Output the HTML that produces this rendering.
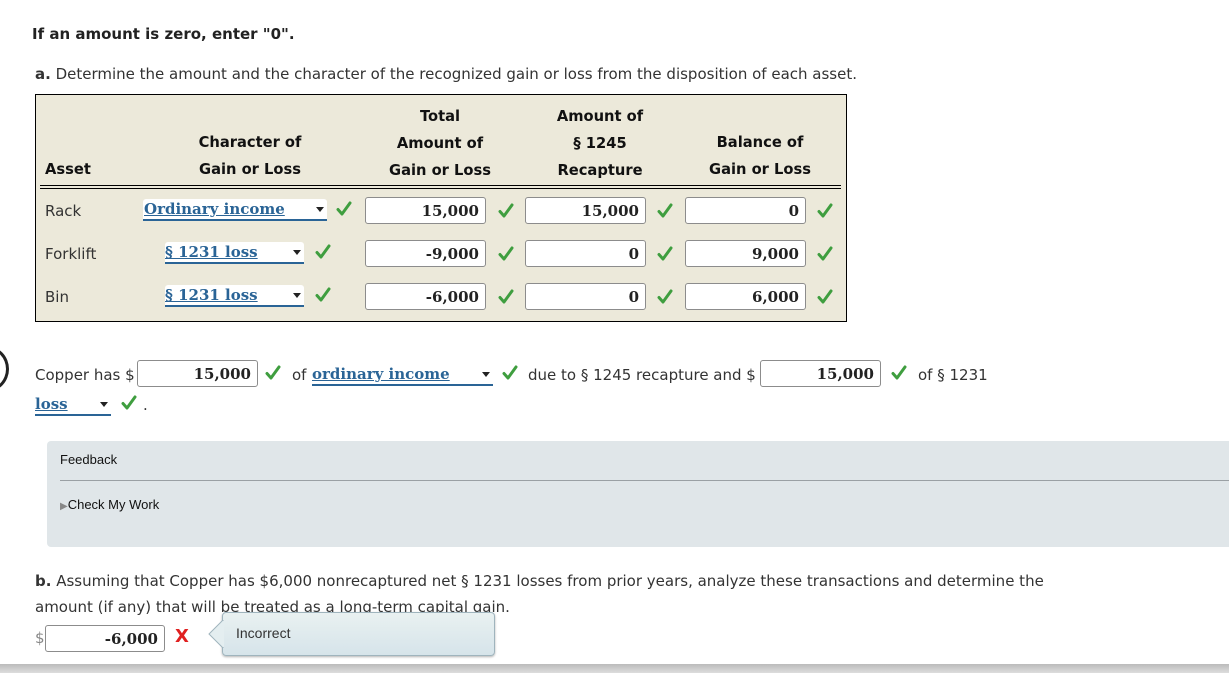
<!DOCTYPE html>
<html><head><meta charset="utf-8"><style>
body{margin:0;width:1229px;height:673px;position:relative;background:#fff;font-family:Verdana,"DejaVu Sans",sans-serif;font-size:15px;color:#333;overflow:hidden}
.a{position:absolute;white-space:nowrap}
.t{position:absolute;white-space:nowrap;line-height:18px}
.in{position:absolute;height:25px;width:119px;border:1px solid #8c8c8c;border-radius:3px;background:#fff;font-family:"DejaVu Serif",Georgia,serif;font-weight:bold;font-size:15px;color:#222;text-align:right;line-height:27px;box-sizing:content-box;padding:0;}
.in span{padding-right:6px}
.ck{position:absolute;width:16px;height:16px}
.sel{position:absolute;font-family:"DejaVu Serif",Georgia,serif;font-weight:bold;font-size:15px;color:#2a6496;border-bottom:2px solid #2a6496;height:20px;line-height:20px;text-decoration:underline;background:#fff;border-radius:3px 3px 0 0}
.sel i{position:absolute;right:3px;top:8px;width:0;height:0;border-left:4px solid transparent;border-right:4px solid transparent;border-top:5px solid #222}
.h{position:absolute;font-weight:bold;color:#111;text-align:center;line-height:27px;font-size:14.7px}
</style></head><body>
<svg width="0" height="0" style="position:absolute"><defs><symbol id="c" viewBox="0 0 16 16"><path d="M2 8.5 L6 13 L14 2" fill="none" stroke="#3f9e3f" stroke-width="3" stroke-linecap="round" stroke-linejoin="round"/></symbol></defs></svg>

<div class="t" style="left:32px;top:25px;font-weight:bold;color:#222">If an amount is zero, enter "0".</div>
<div class="t" style="left:35px;top:65px"><b>a.</b> Determine the amount and the character of the recognized gain or loss from the disposition of each asset.</div>

<div class="a" style="left:35px;top:94px;width:810px;height:226px;border:1px solid #000;background:#ece9da"></div>
<div class="h" style="left:45px;top:156px;text-align:left">Asset</div>
<div class="h" style="left:170px;top:129px;width:160px">Character of<br>Gain or Loss</div>
<div class="h" style="left:370px;top:103px;width:140px">Total<br>Amount of<br>Gain or Loss</div>
<div class="h" style="left:530px;top:103px;width:140px">Amount of<br>§ 1245<br>Recapture</div>
<div class="h" style="left:690px;top:129px;width:140px">Balance of<br>Gain or Loss</div>
<div class="a" style="left:40px;top:185px;width:801px;height:2px;border-top:1px solid #000;border-bottom:1px solid #000"></div>

<div class="t" style="left:45px;top:202px">Rack</div>
<div class="t" style="left:45px;top:245px">Forklift</div>
<div class="t" style="left:45px;top:288px">Bin</div>

<div class="sel" style="left:143px;top:199px;width:184px"><span style="padding-left:1px">Ordinary income</span><i></i></div>
<div class="sel" style="left:165px;top:242px;width:139px"><span>§ 1231 loss</span><i></i></div>
<div class="sel" style="left:165px;top:285px;width:139px"><span>§ 1231 loss</span><i></i></div>
<svg class="ck" style="left:336px;top:201px"><use href="#c"/></svg>
<svg class="ck" style="left:315px;top:244px"><use href="#c"/></svg>
<svg class="ck" style="left:315px;top:287px"><use href="#c"/></svg>

<div class="in" style="left:365px;top:197px"><span>15,000</span></div>
<div class="in" style="left:525px;top:197px"><span>15,000</span></div>
<div class="in" style="left:685px;top:197px"><span>0</span></div>
<div class="in" style="left:365px;top:240px"><span>-9,000</span></div>
<div class="in" style="left:525px;top:240px"><span>0</span></div>
<div class="in" style="left:685px;top:240px"><span>9,000</span></div>
<div class="in" style="left:365px;top:283px"><span>-6,000</span></div>
<div class="in" style="left:525px;top:283px"><span>0</span></div>
<div class="in" style="left:685px;top:283px"><span>6,000</span></div>
<svg class="ck" style="left:498px;top:203px"><use href="#c"/></svg>
<svg class="ck" style="left:657px;top:203px"><use href="#c"/></svg>
<svg class="ck" style="left:817px;top:203px"><use href="#c"/></svg>
<svg class="ck" style="left:498px;top:246px"><use href="#c"/></svg>
<svg class="ck" style="left:657px;top:246px"><use href="#c"/></svg>
<svg class="ck" style="left:817px;top:246px"><use href="#c"/></svg>
<svg class="ck" style="left:498px;top:289px"><use href="#c"/></svg>
<svg class="ck" style="left:657px;top:289px"><use href="#c"/></svg>
<svg class="ck" style="left:817px;top:289px"><use href="#c"/></svg>

<div class="a" style="left:-35px;top:346px;width:38px;height:40px;border:3px solid #222;border-radius:50%"></div>

<div class="t" style="left:35px;top:366px">Copper has $</div>
<div class="in" style="left:137px;top:360px"><span>15,000</span></div>
<svg class="ck" style="left:265px;top:365px"><use href="#c"/></svg>
<div class="t" style="left:292px;top:366px">of</div>
<div class="sel" style="left:312px;top:364px;width:181px"><span>ordinary income</span><i></i></div>
<svg class="ck" style="left:502px;top:365px"><use href="#c"/></svg>
<div class="t" style="left:528px;top:366px">due to § 1245 recapture and $</div>
<div class="in" style="left:760px;top:360px"><span>15,000</span></div>
<svg class="ck" style="left:891px;top:365px"><use href="#c"/></svg>
<div class="t" style="left:918px;top:366px">of § 1231</div>
<div class="sel" style="left:35px;top:394px;width:76px"><span>loss</span><i></i></div>
<svg class="ck" style="left:121px;top:395px"><use href="#c"/></svg>
<div class="t" style="left:143px;top:396px">.</div>

<div class="a" style="left:47px;top:441px;width:1200px;height:106px;background:#e0e6e9;border-radius:4px"></div>
<div class="a" style="left:60px;top:452px;font-family:Arial,'Liberation Sans',sans-serif;font-size:13px;color:#111">Feedback</div>
<div class="a" style="left:60px;top:480px;width:1180px;height:1px;background:#9aa0a4"></div>
<div class="a" style="left:60px;top:497px;font-family:Arial,'Liberation Sans',sans-serif;font-size:13px;color:#111"><span style="color:#888;font-size:10px">&#9654;</span>Check My Work</div>

<div class="t" style="left:35px;top:572px"><b>b.</b> Assuming that Copper has $6,000 nonrecaptured net § 1231 losses from prior years, analyze these transactions and determine the</div>
<div class="t" style="left:35px;top:598px">amount (if any) that will be treated as a long-term capital gain.</div>
<div class="t" style="left:35px;top:629px;color:#888">$</div>
<div class="in" style="left:45px;top:625px;width:118px"><span>-6,000</span></div>
<div class="a" style="left:175px;top:626px;color:#e02020;font-weight:bold;font-size:18px">X</div>
<div class="a" style="left:222px;top:612px;width:271px;height:42px;border:1px solid #9fb4bd;border-radius:4px;background:linear-gradient(#e9f1f1,#d6e4ea);box-shadow:0 1px 2px rgba(0,0,0,.3)"></div>
<svg class="a" style="left:208px;top:620px" width="16" height="28"><path d="M15 0 L1 14 L15 28 Z" fill="#e4eef0" stroke="#9fb4bd"/><path d="M15.5 1 L15.5 27" stroke="#e4eef0" stroke-width="2"/></svg>
<div class="a" style="left:236px;top:625px;font-family:Arial,'Liberation Sans',sans-serif;font-size:14px;color:#333">Incorrect</div>
<div class="a" style="left:0;top:664px;width:1229px;height:9px;background:linear-gradient(#bbb,#ddd)"></div>
</body></html>
